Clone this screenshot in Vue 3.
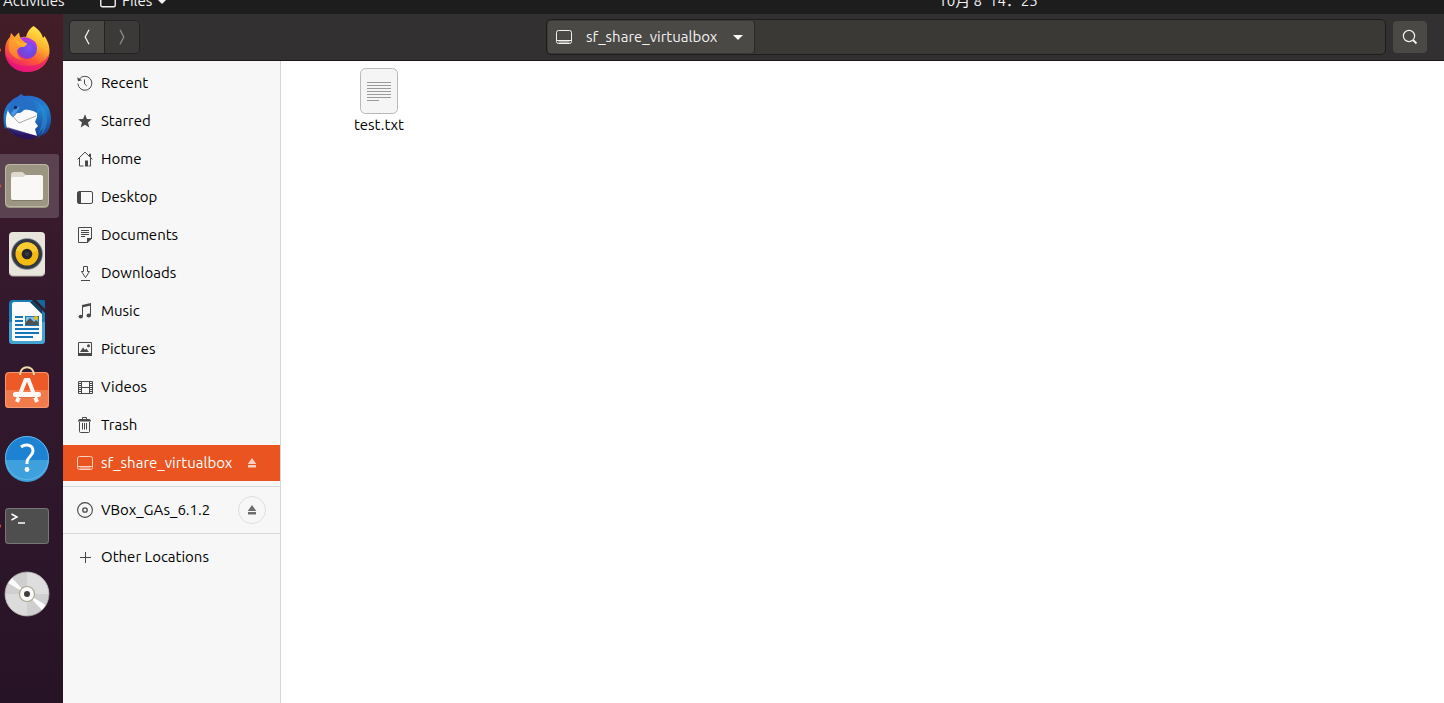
<template>
  <div class="desktop">
    <header class="topbar">
      <button class="activities">Activities</button>
      <button class="app-menu">
        <svg width="16" height="16" viewBox="0 0 16 16">
          <path
            d="M.75 3.5a1.5 1.5 0 0 1 1.5-1.5h3.5l1.5 1.5h6.5a1.5 1.5 0 0 1 1.5 1.5v7.25a1.5 1.5 0 0 1-1.5 1.5H2.25a1.5 1.5 0 0 1-1.5-1.5z"
            fill="none"
            stroke="#f2f2f2"
            stroke-width="1.4"
          />
        </svg>
        <span>Files</span>
        <svg width="8" height="16" viewBox="0 0 8 16">
          <path d="M0 7h8L4 11z" fill="#f2f2f2" />
        </svg>
      </button>
      <button class="clock">10月 8&nbsp; 14：25</button>
    </header>

    <div class="workspace">
      <nav class="dock">
        <button
          v-for="app in dockApps"
          :key="app.name"
          class="dock-item"
          :class="{ active: app.active, running: app.running }"
          :aria-label="app.name"
        >
          <svg width="48" height="48" viewBox="0 0 48 48" v-html="app.icon"></svg>
        </button>
      </nav>

      <main class="window">
        <div class="headerbar">
          <div class="nav-buttons">
            <button aria-label="Back">
              <svg width="16" height="16" viewBox="0 0 16 16">
                <path d="M10 .8 6.2 8l3.8 7.2" fill="none" stroke="#f2f2f2" stroke-width="1.3" />
              </svg>
            </button>
            <button aria-label="Forward" class="off">
              <svg width="16" height="16" viewBox="0 0 16 16">
                <path d="M6 .8 9.8 8 6 15.2" fill="none" stroke="#8e8d8c" stroke-width="1.3" />
              </svg>
            </button>
          </div>
          <div class="pathbar">
            <button class="path-button">
              <svg width="16" height="16" viewBox="0 0 16 16" v-html="icons.drive"></svg>
              <span>sf_share_virtualbox</span>
              <svg width="10" height="16" viewBox="0 0 10 16">
                <path d="M0 6h10L5 11z" fill="#fff" />
              </svg>
            </button>
          </div>
          <button class="search" aria-label="Search">
            <svg width="16" height="16" viewBox="0 0 16 16" fill="none" stroke="#f2f2f2">
              <circle cx="7" cy="7" r="5.6" stroke-width="1.2" />
              <path d="M11 11l3.5 3.5" stroke-width="1.8" />
            </svg>
          </button>
        </div>

        <div class="body">
          <aside class="sidebar">
            <ul v-for="(group, i) in places" :key="i">
              <li
                v-for="place in group"
                :key="place.name"
                :class="{ selected: place.name === current }"
              >
                <a href="#" @click.prevent="current = place.name">
                  <svg width="16" height="16" viewBox="0 0 16 16" v-html="icons[place.icon]"></svg>
                  <span>{{ place.name }}</span>
                </a>
                <button v-if="place.eject" class="eject" :aria-label="'Eject ' + place.name">
                  <svg width="10" height="10" viewBox="0 0 10 10">
                    <path d="M5 0l4.3 6H.7zM1 7h8v2.5H1z" fill="currentColor" />
                  </svg>
                </button>
              </li>
            </ul>
          </aside>
          <section class="files">
            <button v-for="file in files" :key="file" class="file">
              <svg width="48" height="48" viewBox="0 0 48 48">
                <rect x="5.5" y="1.5" width="37" height="45" rx="5" fill="#f5f5f5" stroke="#b9b9b9" />
                <path
                  d="M12 15.5h24M12 18.5h24M12 21.5h24M12 24.5h24M12 27.5h24M12 30.5h24M12 33.5h12"
                  stroke="#9b9b9b"
                />
              </svg>
              <span>{{ file }}</span>
            </button>
          </section>
        </div>
      </main>
    </div>
  </div>
</template>

<script setup>
import { ref } from "vue";

const current = ref("sf_share_virtualbox");
const files = ["test.txt"];

const places = [
  [
    { name: "Recent", icon: "recent" },
    { name: "Starred", icon: "star" },
    { name: "Home", icon: "home" },
    { name: "Desktop", icon: "desktop" },
    { name: "Documents", icon: "documents" },
    { name: "Downloads", icon: "downloads" },
    { name: "Music", icon: "music" },
    { name: "Pictures", icon: "pictures" },
    { name: "Videos", icon: "videos" },
    { name: "Trash", icon: "trash" },
    { name: "sf_share_virtualbox", icon: "drive", eject: true },
  ],
  [{ name: "VBox_GAs_6.1.2", icon: "disc", eject: true }],
  [{ name: "Other Locations", icon: "plus" }],
];

// 16px symbolic icons, they take the text color of the row
const icons = {
  recent: `<path d="M2.2 4.2A7 7 0 1 1 .9 8.6" fill="none" stroke="currentColor"/>
    <path d="M.2 2.2 1 6.3l4-1z" fill="currentColor"/>
    <path d="M7.5 4.5v4.3l2.2 2" fill="none" stroke="currentColor"/>`,
  star: `<path d="M8 1.3l1.9 4.7 5 .3-3.9 3.2 1.3 4.9L8 11.7l-4.3 2.7L5 9.5 1.1 6.3l5-.3z" fill="currentColor"/>`,
  home: `<path d="M.6 8.4 8 1.1l7.4 7.3M2.5 7v8h4M13.5 7v8h-2M12.5 5V3h1v3" fill="none" stroke="currentColor"/>
    <path d="M8 9.5h3v6H8z" fill="currentColor"/>`,
  desktop: `<rect x=".5" y="2.5" width="15" height="12" rx="1.5" fill="none" stroke="currentColor"/>
    <path d="M1 3h3v11H1z" fill="currentColor"/>`,
  documents: `<path d="M10 15.5H1.5V.5h13v10.5" fill="none" stroke="currentColor"/>
    <path d="M4 3.5h8M4 5.5h8M4 7.5h8M4 9.5h4" stroke="currentColor"/>
    <path d="M10 11h5v.5L10.5 16H10z" fill="currentColor"/>`,
  downloads: `<path d="M6.5 1.5h4v5h2L8.5 12.6l-4-6.1h2zM4 15.5h9" fill="none" stroke="currentColor"/>`,
  music: `<path d="M5 2l9-2v2.5L5 4.5z" fill="currentColor"/>
    <path d="M5.5 2v11M13.5 1v11" stroke="currentColor"/>
    <ellipse cx="3.8" cy="13.6" rx="2.2" ry="1.9" fill="currentColor"/>
    <ellipse cx="11.8" cy="12.5" rx="2.2" ry="1.9" fill="currentColor"/>`,
  pictures: `<path d="M1.5 1.5h13v12h-13z" fill="none" stroke="currentColor"/>
    <path d="M1 12h14v3H1zM3 11l3-4.5L8 9l1.2-1.5L12 11z" fill="currentColor"/>
    <circle cx="11.5" cy="4.7" r="1.5" fill="currentColor"/>`,
  videos: `<path d="M1.5 2.5h14v12h-14zM4.5 2.5v12M12.5 2.5v12M4.5 8.5h8" fill="none" stroke="currentColor"/>
    <path d="M2 4.5h2M2 6.5h2M2 8.5h2M2 10.5h2M2 12.5h2M13 4.5h2M13 6.5h2M13 8.5h2M13 10.5h2M13 12.5h2" stroke="currentColor"/>`,
  trash: `<path d="M5.5 2v-1.5h4V2M2.5 5v9.500a1 1 0 0 0 1 1h8a1 1 0 0 0 1-1V5" fill="none" stroke="currentColor"/>
    <path d="M1 4.5c0-1 .5-2.500 2-2.500h9c1.500 0 2 1.500 2 2.500z" fill="currentColor"/>
    <path d="M5.5 6v6.500M7.5 6v6.500M9.500 6v6.500" stroke="currentColor"/>`,
  drive: `<rect x=".5" y="1.5" width="15" height="13" rx="2" fill="none" stroke="currentColor"/>
    <path d="M1 11.5h14M2.5 13h11" stroke="currentColor"/>`,
  disc: `<circle cx="8" cy="8" r="7.4" fill="none" stroke="currentColor" stroke-width="1.1"/>
    <circle cx="8" cy="8" r="2.2" fill="none" stroke="currentColor" stroke-width="1.3"/>`,
  plus: `<path d="M8.5 3v11M3 8.5h11" stroke="currentColor"/>`,
};

const firefox = `
  <defs>
    <linearGradient id="ffBody" x1=".8" y1="0" x2=".3" y2="1">
      <stop offset="0" stop-color="#fff14f"/><stop offset=".35" stop-color="#ffb52e"/>
      <stop offset=".65" stop-color="#ff5a35"/><stop offset="1" stop-color="#e6107e"/>
    </linearGradient>
    <radialGradient id="ffGlobe" cx=".6" cy=".4" r=".7">
      <stop offset="0" stop-color="#8d4bff"/><stop offset=".5" stop-color="#6a4be0"/><stop offset="1" stop-color="#a52bc9"/>
    </radialGradient>
    <linearGradient id="ffFox" x1="0" y1="0" x2="0" y2="1">
      <stop offset="0" stop-color="#ffa42b"/><stop offset="1" stop-color="#ff7a35"/>
    </linearGradient>
  </defs>
  <path d="M30.500 0c6 4 8.500 8 9.500 12l1.500-2c3.500 5 5 10 5 14.500C46.500 37.500 36.500 46 24 46S2 37 2 25c0-7 2-11 5-14l1-4 3.500 4 4.500-4.500 1 5c2 0 4-1 6-.5 1-5 4-8.500 7.500-11z" fill="url(#ffBody)"/>
  <path d="M2 27c3 9 12 13 22 13s18-3 22-12c-2 11-11 18-22 18S3 38 2 27z" fill="#e7127a" opacity=".7"/>
  <circle cx="24" cy="23" r="10" fill="url(#ffGlobe)"/>
  <path d="M17 12c5-2 10 0 14 3 3 2 3 6 3 9l-3-5c-3-4-8-4-14-3z" fill="#b03be0"/>
  <path d="M7 13c3-1 5-2 10-1 3 3 6 5 6 6 0 1-2 3-5 3-2 1-4 2-4 4 0 4 2 8 7 9-7 0-13-4-15-10-1-5 0-8 1-11z" fill="url(#ffFox)"/>
  <path d="M12 12c4 5 8 4 12 5 0 3-3 4-6 4-2-2-6-4-6-9z" fill="#ffb02e"/>`;

const thunderbird = `
  <defs>
    <linearGradient id="tbBird" x1=".5" y1="0" x2=".7" y2="1">
      <stop offset="0" stop-color="#2a67c9"/><stop offset=".4" stop-color="#1f83d2"/><stop offset="1" stop-color="#17398d"/>
    </linearGradient>
  </defs>
  <path d="M14 3l4-3 3 2c15-2 27 7 27 23 0 9-4 14-8 17l1-3-7 6 2-4-9 4 4-4C17 45 8 41 4 33l-2 2C-1 22 1 14 6 9c3-3 5-5 8-6z" fill="url(#tbBird)"/>
  <path d="M3 31c5 7 12 10 19 9l11 1-3 4c-12 1-22-4-27-14z" fill="#27145c"/>
  <path d="M5 16c10-2 20-1 29 2v5l-2 5 3 4-3 3 2 7L4 34c-2-6-1-13 1-18z" fill="#fafafa"/>
  <path d="M5 17l11 12 17-7" fill="none" stroke="#a9a9a9"/>
  <path d="M5 16C10 4 24 2 32 10c2 3 2 6 2 9-5-3-10-5-13-3-3 3-4 3-7 3-1 1-2 3-4 4-2-1-4-4-5-7z" fill="#256fc4"/>
  <path d="M10 17c2-3 4-4 7-4l-4 6-3 4-2-4z" fill="#4b98dc"/>
  <circle cx="12.500" cy="13.500" r="1.700" fill="#152b61"/>
  <path d="M25 4c13 4 18 15 12 31l-2 6 5-7-2 8c11-14 8-32-13-38z" fill="#2f8fd1" opacity=".55"/>
  <path d="M4 33l30 9-2 2C20 43 9 41 4 33z" fill="#301363" opacity=".7"/>`;

const filesIcon = `
  <rect x="2" y="2" width="44" height="44" rx="4.5" fill="#9c9581"/>
  <rect x="2.5" y="2.5" width="43" height="42" rx="4" fill="none" stroke="#bcb6a5"/>
  <path d="M8 13c0-2 1-3 3-3h8c2 0 2 3 5 3v4H8z" fill="#dedace"/>
  <path d="M8 17c0-1 1-2 2-2h9c3 0 3-2 5-2h14c1.5 0 2 1 2 2v21c0 1-.5 2-2 2H10c-1.500 0-2-1-2-2z" fill="#f9f8f6"/>
  <path d="M9 38.5h30" stroke="#817b6b"/>`;

const rhythmbox = `
  <rect x="6" y="2" width="36" height="44" rx="4" fill="#e8e5dc"/>
  <path d="M7 43c0 2 1 3 3 3h28c2 0 3-1 3-3" fill="none" stroke="#b8b3a6"/>
  <circle cx="24" cy="24" r="15.8" fill="#77808a"/>
  <circle cx="24" cy="24" r="15" fill="#343740"/>
  <circle cx="24" cy="24" r="11.5" fill="#f3bb12"/>
  <path d="M24 24 13 20.5A11.5 11.5 0 0 1 35 20.5z" fill="#f9cc32"/>
  <circle cx="24" cy="24" r="5.3" fill="#24272d"/>
  <circle cx="24" cy="24" r="2" fill="#3c3f45"/>`;

const writer = `
  <rect x="6" y="2" width="36" height="44" rx="4" fill="#1b7eb5"/>
  <path d="M6 24h36v18c0 3-1 4-4 4H10c-3 0-4-1-4-4z" fill="#45a3d2"/>
  <path d="M27 0l15 15V2c0-1-1-2-2-2z" fill="#311c2d"/>
  <path d="M33 2h8l1 1v8z" fill="#17669b"/>
  <path d="M11 4h16l12 12v25c0 1-1 2-2 2H11c-1 0-2-1-2-2V6c0-1 1-2 2-2z" fill="#fbfbfb"/>
  <path d="M27 4l12 12V12l-9-9z" fill="#0e405f"/>
  <path d="M12 19h8M12 23h8M12 27h8M12 31h24M12 35h24M12 39h18" stroke="#1476b8" stroke-width="2"/>
  <path d="M22 18h14v10H22z" fill="#1b79b7"/>
  <path d="M23 19h12v8H23z" fill="#7fc0e8"/>
  <path d="M23 27v-3l4-4 4 4 2-2 2 2v3z" fill="#4f514f"/>
  <circle cx="33" cy="20" r="2" fill="#f1b911"/>`;

const software = `
  <rect x="2" y="6" width="44" height="36" rx="4" fill="#ed5a28"/>
  <path d="M2 24h44v14c0 3-1 4-4 4H6c-3 0-4-1-4-4z" fill="#f37a4b"/>
  <rect x="2.5" y="6.5" width="43" height="35" rx="4" fill="none" stroke="#f69a75"/>
  <path d="M17 9c0-10.500 14-10.500 14 0" fill="none" stroke="#eddcad" stroke-width="2"/>
  <path d="M14 36l8.500-22h3L34 36" fill="none" stroke="#fff7f3" stroke-width="4"/>
  <rect x="10" y="26" width="28" height="5" rx="2" fill="#fff7f3"/>
  <path d="M16 31.500h16" stroke="#d9734f"/>`;

const help = `
  <circle cx="24" cy="24" r="22" fill="#1d82d2"/>
  <path d="M2 26a22 22 0 0 0 44 0z" fill="#3fa0de"/>
  <circle cx="24" cy="24" r="21.5" fill="none" stroke="#63b5e8"/>
  <path d="M18 13c4-3 12-3 12 4 0 5-6 6-6 11v2" fill="none" stroke="#fff" stroke-width="3"/>
  <circle cx="24" cy="35.5" r="2.4" fill="#fff"/>`;

const terminal = `
  <rect x="2" y="6" width="44" height="36" rx="3" fill="#4e4e4e"/>
  <rect x="2.5" y="6.5" width="43" height="35" rx="3" fill="none" stroke="#777"/>
  <path d="M8.5 12l5.5 3-5.500 3" fill="none" stroke="#fff" stroke-width="1.5"/>
  <path d="M15 21h7" stroke="#fff" stroke-width="1.5"/>`;

const cd = `
  <circle cx="24" cy="24" r="22" fill="#cfcfcf"/>
  <path d="M24 24V2a22 22 0 0 1 22 22z" fill="#dedede"/>
  <path d="M24 24v22A22 22 0 0 1 2 24z" fill="#dcdcdc"/>
  <path d="M24 24 5 13l4-5zM24 24l19 11-4 5z" fill="#fff"/>
  <circle cx="24" cy="24" r="22" fill="none" stroke="#aaa" stroke-width=".8"/>
  <circle cx="24" cy="24" r="7.5" fill="#fafafa" stroke="#aaa58f" stroke-width="1.2"/>
  <circle cx="24" cy="24" r="3" fill="#3f3e3b"/>`;

const dockApps = [
  { name: "Firefox", icon: firefox, running: true },
  { name: "Thunderbird", icon: thunderbird },
  { name: "Files", icon: filesIcon, running: true, active: true },
  { name: "Rhythmbox", icon: rhythmbox },
  { name: "LibreOffice Writer", icon: writer },
  { name: "Ubuntu Software", icon: software },
  { name: "Help", icon: help },
  { name: "Terminal", icon: terminal, running: true },
  { name: "VBox_GAs_6.1.2", icon: cd },
];
</script>

<style>
body {
  margin: 0;
}
</style>

<style scoped>
.desktop {
  height: 100vh;
  display: flex;
  flex-direction: column;
  font-family: Ubuntu, "Noto Sans", "Noto Sans CJK SC", sans-serif;
  font-size: 15px;
  line-height: 20px;
  color: #000;
}
button {
  margin: 0;
  padding: 0;
  border: 0;
  background: none;
  font: inherit;
  color: inherit;
}
svg {
  display: block;
  flex: none;
}

/* top panel, only its lower edge is on screen */
.topbar {
  display: flex;
  align-items: flex-end;
  height: 14px;
  padding-bottom: 3px;
  box-sizing: border-box;
  overflow: hidden;
  background: #1d1d1d;
  color: #f2f2f2;
}
.activities {
  margin-left: 3px;
  width: 64px;
  text-align: left;
}
.app-menu {
  display: flex;
  align-items: center;
  gap: 6px;
  margin-left: 33px;
}
.clock {
  margin-left: 772px;
  white-space: nowrap;
}

.workspace {
  flex: 1;
  min-height: 0;
  display: flex;
}
.dock {
  width: 63px;
  flex: none;
  box-sizing: border-box;
  padding-top: 4px;
  display: flex;
  flex-direction: column;
  gap: 4px;
  background: linear-gradient(#431e28, #36192d 35%, #2f172c 65%, #271326);
}
.dock-item {
  position: relative;
  width: 59px;
  height: 64px;
  padding-left: 3px;
  border-radius: 0 3px 3px 0;
}
.dock-item.active {
  background: #5b4250;
}
.dock-item.running::before {
  content: "";
  position: absolute;
  left: -3px;
  top: 30px;
  width: 4px;
  height: 4px;
  border-radius: 50%;
  background: #e95420;
}

.window {
  flex: 1;
  min-width: 0;
  display: flex;
  flex-direction: column;
}
.headerbar {
  display: flex;
  align-items: center;
  height: 46px;
  padding: 0 17px 0 6px;
  background: #323030;
  border-bottom: 1px solid #1b1819;
  color: #f2f2f2;
}
.nav-buttons {
  display: flex;
  margin-right: 406px;
  border: 1px solid #242222;
  border-radius: 5px;
  overflow: hidden;
}
.nav-buttons button {
  display: flex;
  align-items: center;
  justify-content: center;
  width: 34px;
  height: 32px;
  background: #4a4946;
}
.nav-buttons .off {
  width: 35px;
  background: #3b3a39;
  border-left: 1px solid #242222;
}
.pathbar {
  flex: 1;
  display: flex;
  box-sizing: border-box;
  height: 36px;
  padding: 1px;
  background: #3a3936;
  border: 1px solid #1e1c1c;
  border-radius: 5px;
}
.path-button {
  display: flex;
  align-items: center;
  padding: 0 11px 0 8px;
  background: #4a4946;
  border-radius: 3px;
  box-shadow: 1px 0 #2a2828;
}
.path-button span {
  margin: 0 16px 0 14px;
}
.search {
  display: flex;
  align-items: center;
  justify-content: center;
  width: 34px;
  height: 32px;
  margin-left: 7px;
  background: #4a4946;
  border-radius: 4px;
}

.body {
  flex: 1;
  min-height: 0;
  display: flex;
}
.sidebar {
  width: 217px;
  flex: none;
  background: #f7f7f7;
  border-right: 1px solid #d6d6d6;
}
.sidebar ul {
  list-style: none;
  margin: 0;
  padding: 5px 0;
  display: flex;
  flex-direction: column;
  gap: 2px;
}
.sidebar ul:first-child {
  padding-top: 4px;
}
.sidebar ul + ul {
  border-top: 1px solid #d9d9d9;
}
.sidebar li {
  display: flex;
  align-items: center;
  height: 36px;
  padding: 0 14px;
}
.sidebar a {
  flex: 1;
  min-width: 0;
  display: flex;
  align-items: center;
  gap: 8px;
  color: inherit;
  text-decoration: none;
  white-space: nowrap;
}
.sidebar a svg {
  color: #484848;
}
.sidebar li.selected {
  background: #e95420;
  color: #fff;
}
.sidebar li.selected a svg {
  color: #fbd0c1;
}
.eject {
  display: flex;
  flex: none;
  align-items: center;
  justify-content: center;
  width: 28px;
  height: 28px;
  box-sizing: border-box;
  border: 1px solid #dedede;
  border-radius: 50%;
  color: #6e6e6e;
}
.selected .eject {
  border-color: transparent;
  color: #fbd0c1;
}

.files {
  flex: 1;
  display: flex;
  align-items: flex-start;
  padding: 6px 38px;
  background: #fff;
}
.file {
  display: flex;
  flex-direction: column;
  align-items: center;
  width: 120px;
}
</style>
